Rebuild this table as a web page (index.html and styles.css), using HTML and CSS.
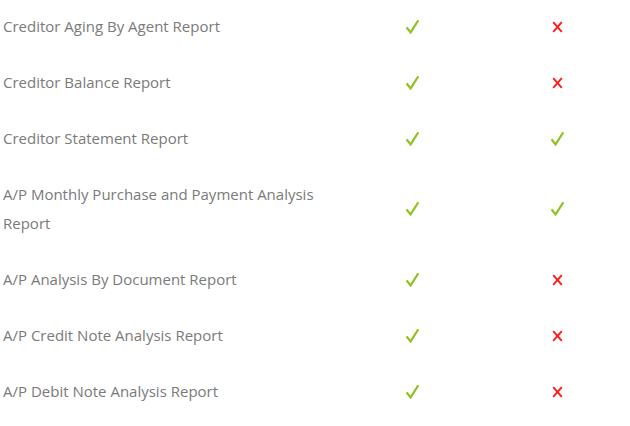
FILE: index.html
```html
<!DOCTYPE html>
<html>
<head>
<meta charset="utf-8">
<link rel="stylesheet" href="styles.css">
</head>
<body>
<table class="features">
  <tr><td class="name">Creditor Aging By Agent Report</td><td class="mark"><svg class="yes" viewBox="0 0 13 14" width="13" height="14"><path d="M1.2 8.2 L4.6 12.4 L11.8 1.2"/></svg></td><td class="mark"><svg class="no" viewBox="0 0 11 12" width="11" height="12"><path d="M1.2 1.2 L9.8 10.8 M9.8 1.2 L1.2 10.8"/></svg></td></tr>
  <tr><td class="name">Creditor Balance Report</td><td class="mark"><svg class="yes" viewBox="0 0 13 14" width="13" height="14"><path d="M1.2 8.2 L4.6 12.4 L11.8 1.2"/></svg></td><td class="mark"><svg class="no" viewBox="0 0 11 12" width="11" height="12"><path d="M1.2 1.2 L9.8 10.8 M9.8 1.2 L1.2 10.8"/></svg></td></tr>
  <tr><td class="name">Creditor Statement Report</td><td class="mark"><svg class="yes" viewBox="0 0 13 14" width="13" height="14"><path d="M1.2 8.2 L4.6 12.4 L11.8 1.2"/></svg></td><td class="mark"><svg class="yes" viewBox="0 0 13 14" width="13" height="14"><path d="M1.2 8.2 L4.6 12.4 L11.8 1.2"/></svg></td></tr>
  <tr><td class="name">A/P Monthly Purchase and Payment Analysis Report</td><td class="mark"><svg class="yes" viewBox="0 0 13 14" width="13" height="14"><path d="M1.2 8.2 L4.6 12.4 L11.8 1.2"/></svg></td><td class="mark"><svg class="yes" viewBox="0 0 13 14" width="13" height="14"><path d="M1.2 8.2 L4.6 12.4 L11.8 1.2"/></svg></td></tr>
  <tr><td class="name">A/P Analysis By Document Report</td><td class="mark"><svg class="yes" viewBox="0 0 13 14" width="13" height="14"><path d="M1.2 8.2 L4.6 12.4 L11.8 1.2"/></svg></td><td class="mark"><svg class="no" viewBox="0 0 11 12" width="11" height="12"><path d="M1.2 1.2 L9.8 10.8 M9.8 1.2 L1.2 10.8"/></svg></td></tr>
  <tr><td class="name">A/P Credit Note Analysis Report</td><td class="mark"><svg class="yes" viewBox="0 0 13 14" width="13" height="14"><path d="M1.2 8.2 L4.6 12.4 L11.8 1.2"/></svg></td><td class="mark"><svg class="no" viewBox="0 0 11 12" width="11" height="12"><path d="M1.2 1.2 L9.8 10.8 M9.8 1.2 L1.2 10.8"/></svg></td></tr>
  <tr><td class="name">A/P Debit Note Analysis Report</td><td class="mark"><svg class="yes" viewBox="0 0 13 14" width="13" height="14"><path d="M1.2 8.2 L4.6 12.4 L11.8 1.2"/></svg></td><td class="mark"><svg class="no" viewBox="0 0 11 12" width="11" height="12"><path d="M1.2 1.2 L9.8 10.8 M9.8 1.2 L1.2 10.8"/></svg></td></tr>
</table>
</body>
</html>
```
FILE: styles.css
```css
html, body { margin: 0; padding: 0; background: #fff; }
body { font-family: "Open Sans", "Liberation Sans", sans-serif; }
.features { border-collapse: collapse; width: 630px; table-layout: fixed; }
.features td { padding: 12px 3px 15px; font-size: 15px; line-height: 29px; color: #7a7a7a; vertical-align: middle; }
.features td.name { width: 334px; }
.features td.mark { width: 139px; text-align: center; line-height: 0; }
.features svg { display: inline-block; vertical-align: middle; fill: none; }
.features svg.yes { stroke: #8dc21f; stroke-width: 2.2; stroke-linecap: square; }
.features svg.no { stroke: #ff1a1a; stroke-width: 1.9; }
```
